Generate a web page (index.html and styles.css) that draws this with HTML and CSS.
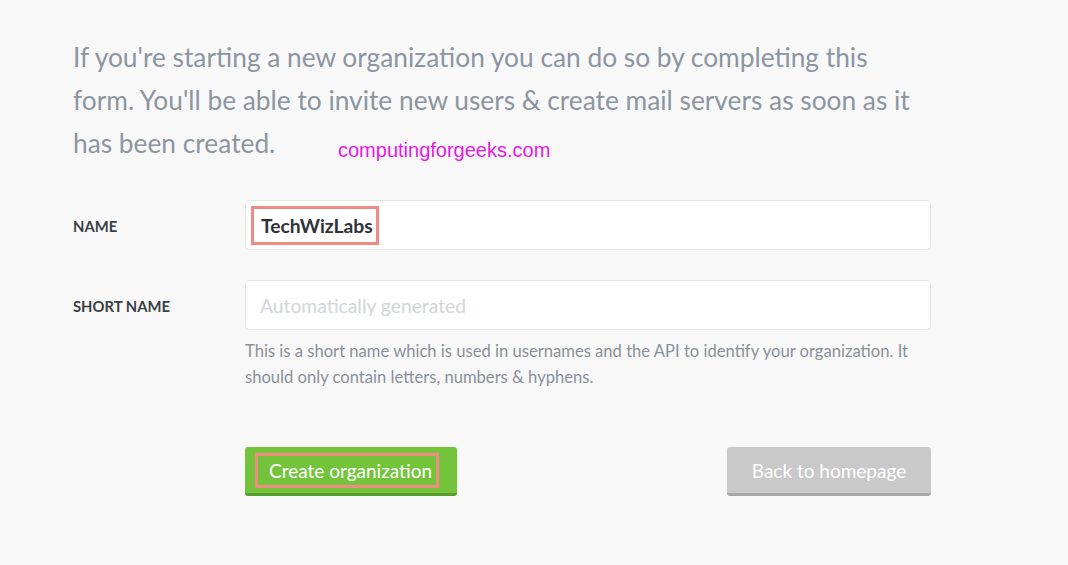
FILE: index.html
```html
<!DOCTYPE html>
<html>
<head>
<meta charset="utf-8">
<link rel="stylesheet" href="styles.css">
</head>
<body>
<div class="page">
  <p class="intro">If you're starting a new organization you can do so by completing this form. You'll be able to invite new users &amp; create mail servers as soon as it has been created.</p>
  <span class="watermark">computingforgeeks.com</span>
  <div class="form">
    <div class="row">
      <label class="label">NAME</label>
      <div class="field">
        <div class="input filled"><span class="mark">TechWizLabs</span></div>
      </div>
    </div>
    <div class="row row-second">
      <label class="label">SHORT NAME</label>
      <div class="field">
        <div class="input placeholder">Automatically generated</div>
        <p class="help">This is a short name which is used in usernames and the API to identify your organization. It should only contain letters, numbers &amp; hyphens.</p>
      </div>
    </div>
    <div class="actions">
      <button class="btn btn-green"><span class="mark-btn">Create organization</span></button>
      <button class="btn btn-gray">Back to homepage</button>
    </div>
  </div>
</div>
</body>
</html>
```

FILE: styles.css
```css
html, body {
  margin: 0;
  padding: 0;
  background: #f8f8f8;
  font-family: "Lato", "Noto Sans", sans-serif;
}
.page {
  position: relative;
  width: 858px;
  padding: 36px 0 0 73px;
}
.intro {
  margin: 0;
  width: 845px;
  font-size: 26.3px;
  line-height: 43px;
  color: #8c95a1;
  font-weight: 400;
}
.watermark {
  position: absolute;
  left: 338px;
  top: 139px;
  font-family: "Liberation Sans", Arial, sans-serif;
  font-size: 20px;
  color: #e619e6;
}
.form {
  margin-top: 35px;
}
.row {
  display: grid;
  grid-template-columns: 172px 1fr;
  align-items: start;
}
.row-second {
  margin-top: 30px;
}
.label {
  font-size: 14.8px;
  font-weight: 700;
  color: #3b3f45;
  line-height: 50px;
  padding-top: 1px;
  height: 50px;
  box-sizing: border-box;
}
.input {
  box-sizing: border-box;
  height: 50px;
  background: #fff;
  border: 1px solid #e4e6e8;
  border-radius: 4px;
  display: flex;
  align-items: center;
  padding-left: 14px;
  font-size: 19.3px;
}
.input.filled {
  padding-left: 5px;
}
.mark {
  border: 3px solid #f08a82;
  padding: 5px 3px 5px 7px;
  font-weight: 700;
  font-size: 19.3px;
  color: #2f3338;
}
.placeholder {
  color: #d2d5da;
}
.help {
  margin: 8px 0 0;
  font-size: 16.6px;
  line-height: 26px;
  color: #8a909a;
}
.actions {
  display: flex;
  justify-content: space-between;
  margin-left: 172px;
  margin-top: 57px;
}
.btn {
  height: 49px;
  border: none;
  border-radius: 3px;
  font-family: inherit;
  font-size: 19px;
  color: #fff;
  padding: 0;
  display: flex;
  align-items: center;
  box-sizing: border-box;
}
.btn-green {
  width: 212px;
  background: #73c43b;
  border-bottom: 3px solid #5a9b2d;
  padding-left: 10px;
}
.mark-btn {
  border: 3px solid #f08a82;
  padding: 3px 4px 3px 11px;
}
.btn-gray {
  width: 204px;
  background: #c9c9c9;
  border-bottom: 3px solid #a8a8a8;
  justify-content: center;
}
```
